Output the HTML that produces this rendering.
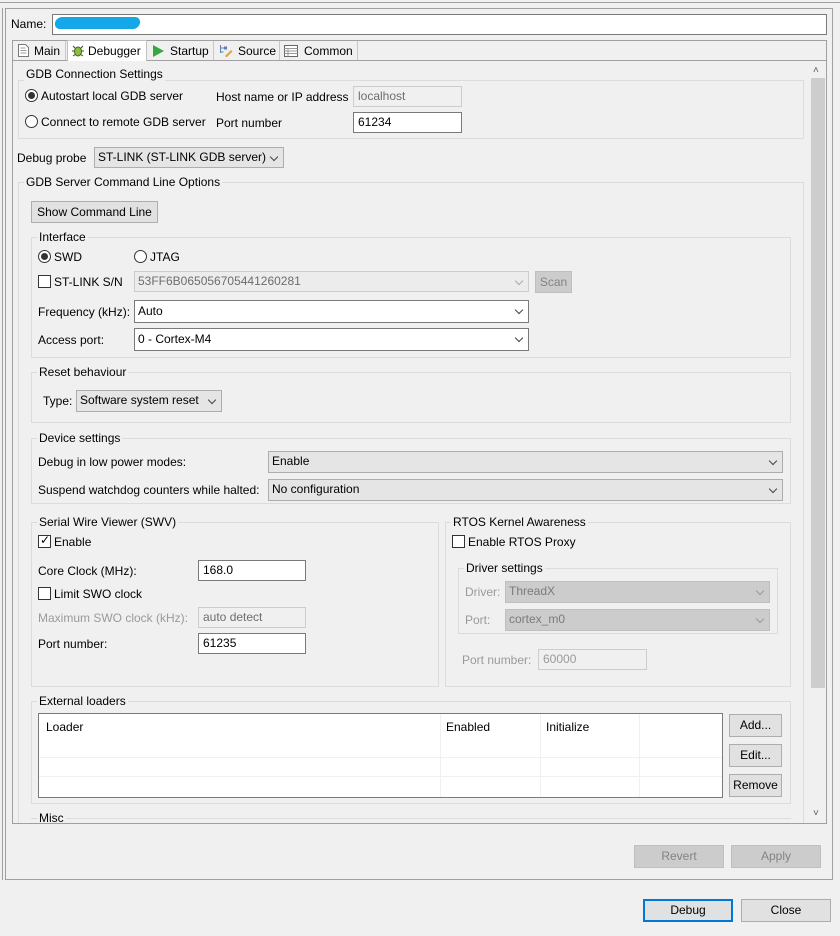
<!DOCTYPE html>
<html><head><meta charset="utf-8"><style>
*{box-sizing:border-box;margin:0;padding:0}
body{width:840px;height:936px;background:#f0f0f0;font-family:"Liberation Sans",sans-serif;font-size:12px;color:#000;position:relative;overflow:hidden}
.a{position:absolute}
.t{position:absolute;white-space:nowrap;line-height:14px}
.g{position:absolute;border:1px solid #dcdcdc}
.gl{position:absolute;background:#f0f0f0;padding:0 2px;white-space:nowrap;line-height:14px}
.in{position:absolute;background:#fff;border:1px solid #7a7a7a;padding:0 4px;line-height:18px;white-space:nowrap}
.dis{background:#f0f0f0;border:1px solid #ccc;color:#6d6d6d}
.cb{position:absolute;background:#e5e5e5;border:1px solid #adadad;padding:0 3px;line-height:18px;white-space:nowrap}
.cw{position:absolute;background:#fff;border:1px solid #7a7a7a;padding:0 3px;line-height:18px;white-space:nowrap}
.cd{position:absolute;background:#ccc;border:1px solid #bfbfbf;color:#7a7a7a;padding:0 3px;line-height:18px;white-space:nowrap}
.arr{position:absolute;right:6px;top:6px;width:6px;height:6px;border-right:1px solid #444;border-bottom:1px solid #444;transform:rotate(45deg)}
.cd .arr{border-color:#999}
.btn{position:absolute;background:#e1e1e1;border:1px solid #adadad;text-align:center;line-height:20px;white-space:nowrap}
.bd{background:#ccc;border-color:#bfbfbf;color:#838383}
.rad{position:absolute;width:13px;height:13px;border:1px solid #333;border-radius:50%;background:#fff}
.rad.on::after{content:"";position:absolute;left:2px;top:2px;width:7px;height:7px;border-radius:50%;background:#333}
.chk{position:absolute;width:13px;height:13px;border:1px solid #333;background:#fff}
.gr{color:#6d6d6d}
</style></head><body>
<div class="a" style="left:0;top:2px;width:840px;height:1px;background:#a0a0a0"></div>
<div class="a" style="left:2px;top:8px;width:1px;height:872px;background:#a0a0a0"></div>
<div class="a" style="left:5px;top:8px;width:828px;height:872px;border:1px solid #a0a0a0"></div>

<div class="t" style="left:11px;top:17px">Name:</div>
<div class="a" style="left:52px;top:14px;width:775px;height:21px;background:#fff;border:1px solid #7a7a7a"></div>
<div class="a" style="left:55px;top:17px;width:85px;height:12px;background:#14a8e8;border-radius:6px;transform:skewX(-10deg)"></div>

<!-- tabs -->
<div class="a" style="left:12px;top:40px;width:815px;height:784px;border:1px solid #a0a0a0"></div>
<div class="a" style="left:12px;top:60px;width:815px;height:1px;background:#a0a0a0"></div>
<div class="a" style="left:13px;top:41px;width:53px;height:19px;border-right:1px solid #c8c8c8"></div>
<div class="t" style="left:18px;top:44px"><svg width="11" height="13" style="vertical-align:-2px;margin-right:5px"><path d="M0.5 0.5h7l3 3v9h-10z" fill="#fff" stroke="#777"/><path d="M2.5 4h5M2.5 6.5h6M2.5 9h6" stroke="#999"/></svg>Main</div>
<div class="a" style="left:67px;top:40px;width:80px;height:21px;background:#fff;border:1px solid #c0c0c0;border-bottom:none"></div>
<div class="t" style="left:71px;top:44px"><svg width="14" height="13" style="vertical-align:-2px;margin-right:3px"><path d="M2 2l3 3M12 2l-3 3M1 7h3M10 7h3M2 12l3-2M12 12l-3-2" stroke="#444"/><ellipse cx="7" cy="7.5" rx="3.5" ry="4.5" fill="#8cbf3f" stroke="#3d6a18"/></svg>Debugger</div>
<div class="a" style="left:147px;top:41px;width:67px;height:19px;border-right:1px solid #c8c8c8"></div>
<div class="t" style="left:153px;top:44px"><span style="display:inline-block;width:0;height:0;border-left:11px solid #3aa642;border-top:6px solid transparent;border-bottom:6px solid transparent;vertical-align:-2px;margin-right:6px"></span>Startup</div>
<div class="a" style="left:214px;top:41px;width:66px;height:19px;border-right:1px solid #c8c8c8"></div>
<div class="t" style="left:219px;top:44px"><svg width="14" height="13" style="vertical-align:-2px;margin-right:5px"><path d="M1.5 1v8M1.5 4h4M1.5 8h3" stroke="#5b7fb0"/><rect x="5" y="2.5" width="3" height="3" fill="#5b7fb0"/><path d="M6 12l6-6 1.5 1.5-6 6z" fill="#e3a33c"/></svg>Source</div>
<div class="a" style="left:281px;top:41px;width:77px;height:19px;border-right:1px solid #c8c8c8"></div>
<div class="t" style="left:284px;top:44px"><svg width="14" height="12" style="vertical-align:-2px;margin-right:6px"><rect x="0.5" y="0.5" width="13" height="11" fill="#fff" stroke="#666"/><path d="M0.5 3.5h13M0.5 6h13M0.5 8.5h13M4 3.5v8" stroke="#999"/></svg>Common</div>

<!-- scrollbar -->
<div class="a" style="left:810px;top:61px;width:16px;height:762px;background:#f0f0f0"></div>
<div class="a" style="left:811px;top:78px;width:14px;height:610px;background:#cdcdcd"></div>
<div class="t" style="left:813px;top:64px;font-size:10px;color:#555">&#x2C4;</div>
<div class="t" style="left:813px;top:807px;font-size:10px;color:#555">&#x2C5;</div>

<!-- GDB connection -->
<div class="g" style="left:18px;top:80px;width:786px;height:59px"></div>
<div class="gl" style="left:24px;top:67px">GDB Connection Settings</div>
<div class="rad on" style="left:25px;top:89px"></div><div class="t" style="left:41px;top:89px">Autostart local GDB server</div>
<div class="rad" style="left:25px;top:115px"></div><div class="t" style="left:41px;top:115px">Connect to remote GDB server</div>
<div class="t" style="left:216px;top:90px">Host name or IP address</div>
<div class="in dis" style="left:353px;top:86px;width:109px;height:21px">localhost</div>
<div class="t" style="left:216px;top:116px">Port number</div>
<div class="in" style="left:353px;top:112px;width:109px;height:21px">61234</div>

<div class="t" style="left:17px;top:151px">Debug probe</div>
<div class="cb" style="left:94px;top:147px;width:190px;height:21px">ST-LINK (ST-LINK GDB server)<span class="arr"></span></div>

<div class="g" style="left:18px;top:182px;width:786px;height:650px"></div>
<div class="gl" style="left:24px;top:175px">GDB Server Command Line Options</div>
<div class="btn" style="left:31px;top:201px;width:127px;height:22px">Show Command Line</div>

<div class="g" style="left:31px;top:237px;width:760px;height:121px"></div>
<div class="gl" style="left:37px;top:230px">Interface</div>
<div class="rad on" style="left:38px;top:250px"></div><div class="t" style="left:54px;top:250px">SWD</div>
<div class="rad" style="left:134px;top:250px"></div><div class="t" style="left:150px;top:250px">JTAG</div>
<div class="chk" style="left:38px;top:275px"></div><div class="t" style="left:54px;top:275px">ST-LINK S/N</div>
<div class="in dis" style="left:134px;top:271px;width:395px;height:21px;padding-left:3px;background:#ececec">53FF6B065056705441260281<span class="arr" style="border-color:#aaa"></span></div>
<div class="btn bd" style="left:535px;top:271px;width:37px;height:22px">Scan</div>
<div class="t" style="left:38px;top:305px">Frequency (kHz):</div>
<div class="cw" style="left:134px;top:300px;width:395px;height:23px;line-height:20px">Auto<span class="arr"></span></div>
<div class="t" style="left:38px;top:333px">Access port:</div>
<div class="cw" style="left:134px;top:328px;width:395px;height:23px;line-height:20px">0 - Cortex-M4<span class="arr"></span></div>

<div class="g" style="left:31px;top:372px;width:760px;height:51px"></div>
<div class="gl" style="left:37px;top:365px">Reset behaviour</div>
<div class="t" style="left:43px;top:394px">Type:</div>
<div class="cb" style="left:76px;top:390px;width:146px;height:22px">Software system reset<span class="arr"></span></div>

<div class="g" style="left:31px;top:438px;width:760px;height:66px"></div>
<div class="gl" style="left:37px;top:431px">Device settings</div>
<div class="t" style="left:38px;top:455px">Debug in low power modes:</div>
<div class="cb" style="left:268px;top:451px;width:515px;height:22px">Enable<span class="arr"></span></div>
<div class="t" style="left:38px;top:483px">Suspend watchdog counters while halted:</div>
<div class="cb" style="left:268px;top:479px;width:515px;height:22px">No configuration<span class="arr"></span></div>

<div class="g" style="left:31px;top:522px;width:408px;height:165px"></div>
<div class="gl" style="left:37px;top:515px">Serial Wire Viewer (SWV)</div>
<div class="chk" style="left:38px;top:535px"></div><div class="t" style="left:40px;top:533px;font-size:12px">&#10003;</div><div class="t" style="left:54px;top:535px">Enable</div>
<div class="t" style="left:38px;top:564px">Core Clock (MHz):</div>
<div class="in" style="left:198px;top:560px;width:108px;height:21px">168.0</div>
<div class="chk" style="left:38px;top:587px"></div><div class="t" style="left:54px;top:587px">Limit SWO clock</div>
<div class="t gr" style="left:38px;top:611px;color:#9a9a9a">Maximum SWO clock (kHz):</div>
<div class="in dis" style="left:198px;top:607px;width:108px;height:21px">auto detect</div>
<div class="t" style="left:38px;top:637px">Port number:</div>
<div class="in" style="left:198px;top:633px;width:108px;height:21px">61235</div>

<div class="g" style="left:445px;top:522px;width:346px;height:165px"></div>
<div class="gl" style="left:451px;top:515px">RTOS Kernel Awareness</div>
<div class="chk" style="left:452px;top:535px"></div><div class="t" style="left:468px;top:535px">Enable RTOS Proxy</div>
<div class="g" style="left:458px;top:568px;width:320px;height:66px"></div>
<div class="gl" style="left:464px;top:561px">Driver settings</div>
<div class="t" style="left:465px;top:585px;color:#9a9a9a">Driver:</div>
<div class="cd" style="left:505px;top:581px;width:265px;height:22px">ThreadX<span class="arr"></span></div>
<div class="t" style="left:465px;top:613px;color:#9a9a9a">Port:</div>
<div class="cd" style="left:505px;top:609px;width:265px;height:22px">cortex_m0<span class="arr"></span></div>
<div class="t" style="left:462px;top:653px;color:#9a9a9a">Port number:</div>
<div class="in dis" style="left:538px;top:649px;width:109px;height:21px;color:#9a9a9a">60000</div>

<div class="g" style="left:31px;top:701px;width:760px;height:103px"></div>
<div class="gl" style="left:37px;top:694px">External loaders</div>
<div class="a" style="left:38px;top:713px;width:685px;height:85px;background:#fff;border:1px solid #7a7a7a"></div>
<div class="a" style="left:440px;top:714px;width:1px;height:83px;background:#eef0f4"></div>
<div class="a" style="left:540px;top:714px;width:1px;height:83px;background:#eef0f4"></div>
<div class="a" style="left:639px;top:714px;width:1px;height:83px;background:#eef0f4"></div>
<div class="a" style="left:39px;top:757px;width:683px;height:1px;background:#eef0f4"></div>
<div class="a" style="left:39px;top:776px;width:683px;height:1px;background:#eef0f4"></div>
<div class="t" style="left:46px;top:720px">Loader</div>
<div class="t" style="left:446px;top:720px">Enabled</div>
<div class="t" style="left:546px;top:720px">Initialize</div>
<div class="btn" style="left:729px;top:714px;width:53px;height:23px">Add...</div>
<div class="btn" style="left:729px;top:744px;width:53px;height:23px">Edit...</div>
<div class="btn" style="left:729px;top:774px;width:53px;height:23px">Remove</div>

<div class="a" style="left:31px;top:818px;width:760px;height:1px;background:#dcdcdc"></div>
<div class="gl" style="left:37px;top:811px">Misc</div>
<div class="a" style="left:13px;top:823px;width:813px;height:1px;background:#a0a0a0"></div>
<div class="a" style="left:13px;top:824px;width:813px;height:10px;background:#f0f0f0"></div>

<div class="btn bd" style="left:634px;top:845px;width:90px;height:23px">Revert</div>
<div class="btn bd" style="left:731px;top:845px;width:90px;height:23px">Apply</div>

<div class="btn" style="left:643px;top:899px;width:90px;height:23px;border:2px solid #0078d7;line-height:19px">Debug</div>
<div class="btn" style="left:741px;top:899px;width:90px;height:23px">Close</div>
</body></html>
